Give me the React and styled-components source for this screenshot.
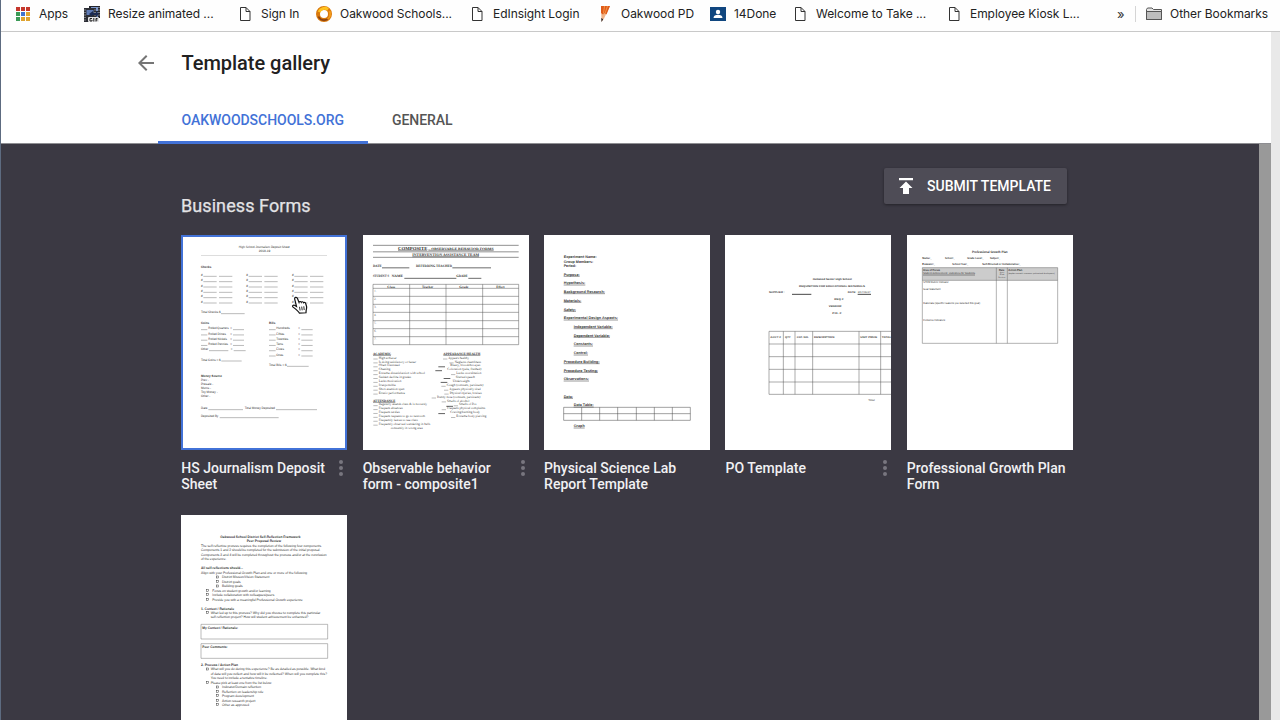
import React from 'react'
import styled, { createGlobalStyle } from 'styled-components'

const palette = {
  blue: '#4272d7',
  dark: '#3b3943',
  button: '#4e4c56',
  ink: '#212121',
  light: '#f1f1f3',
}

const GlobalStyle = createGlobalStyle`
  * { box-sizing: border-box; }
  body {
    margin: 0;
    overflow: hidden;
    background: #fff;
    font-family: Roboto, "Liberation Sans", sans-serif;
  }
`

const Screen = styled.div`
  display: flex;
  flex-direction: column;
  width: 1280px;
  height: 720px;
  overflow: hidden;
  border-left: 1px solid #5d6b80;
`

const BookmarkBar = styled.nav`
  flex: none;
  display: flex;
  align-items: center;
  height: 32px;
  padding: 0 0 4px 14px;
  border-bottom: 1px solid #c9c9c9;
  background: #fefefe;
`

const Bookmark = styled.div`
  flex: none;
  display: flex;
  align-items: center;
  gap: 8px;
  width: ${p => p.$width}px;
  color: #222;
  font: 400 12px/16px Inter, Roboto, sans-serif;
  letter-spacing: -0.05px;
  white-space: nowrap;

  svg {
    flex: none;
    display: block;
  }
`

const More = styled.span`
  width: 19px;
  padding-left: 1px;
  color: #333;
  font: 400 13px/16px Inter, Roboto, sans-serif;
`

const Separator = styled.div`
  width: 1px;
  height: 16px;
  margin-right: 10px;
  background: #d5d5d5;
`

const Body = styled.div`
  flex: 1;
  display: flex;
  min-height: 0;
`

const Page = styled.main`
  width: 1270px;
  display: flex;
  flex-direction: column;
`

const Gutter = styled.div`
  flex: 1;
  background: #e9e9e9;
`

const Header = styled.header`
  flex: none;
  height: 112px;
  background: #fff;
  border-bottom: 1px solid #8e8e92;
`

const TitleRow = styled.div`
  display: flex;
  align-items: center;
  gap: 23.5px;
  height: 61px;
  padding-left: 133px;
`

const Title = styled.h1`
  margin: 1px 0 0;
  color: ${palette.ink};
  font-size: 20px;
  font-weight: 500;
  line-height: 28px;
  letter-spacing: -0.03px;
`

const Tabs = styled.div`
  display: flex;
  height: 51px;
  padding-left: 156.5px;
`

const Tab = styled.div`
  height: 51px;
  padding: 19px 24px 0;
  color: ${p => (p.$active ? palette.blue : '#555')};
  border-bottom: ${p => (p.$active ? `3px solid ${palette.blue}` : 'none')};
  font-size: 14px;
  font-weight: 500;
  line-height: 16px;
  letter-spacing: -0.04px;
`

const Content = styled.div`
  flex: 1;
  display: flex;
  min-height: 0;
  background: ${palette.dark};
`

const Gallery = styled.section`
  width: 1258px;
  padding: 24px 0 0 180px;
`

const ScrollTrack = styled.div`
  flex: 1;
  background: #999;
`

const Toolbar = styled.div`
  display: flex;
  justify-content: space-between;
  width: 886px;
  height: 67.4px;
`

const Heading = styled.h2`
  margin: 26px 0 0;
  color: #e3e3e6;
  font-size: 18px;
  font-weight: 400;
  line-height: 24px;
  letter-spacing: 0.08px;
  -webkit-text-stroke: 0.25px #e3e3e6;
`

const SubmitButton = styled.button`
  display: flex;
  align-items: center;
  gap: 12px;
  width: 183px;
  height: 36px;
  padding: 0 0 0 13px;
  border: 0;
  border-radius: 2px;
  background: ${palette.button};
  box-shadow: 0 1px 3px rgba(0, 0, 0, 0.4);
  color: #fff;
  font: 500 14px/16px Roboto, sans-serif;
  letter-spacing: 0;
  white-space: nowrap;
`

const Grid = styled.div`
  display: grid;
  grid-template-columns: repeat(5, 166px);
  column-gap: 15.4px;
  row-gap: 24px;
  padding-left: 0.3px;
`

const Card = styled.article`
  height: 256px;
`

const Thumb = styled.div`
  position: relative;
  height: 215px;
  background: #fff;
  box-shadow: ${p => (p.$selected ? `inset 0 0 0 2px ${palette.blue}` : 'none')};

  > svg:first-child {
    display: block;
    width: 166px;
    height: 215px;
  }
`

const Caption = styled.div`
  display: flex;
  justify-content: space-between;
  padding-top: 9.6px;
`

const Name = styled.div`
  color: ${palette.light};
  font-size: 14px;
  font-weight: 500;
  line-height: 16px;
  letter-spacing: 0;
  white-space: pre;
`

const Dots = styled.div`
  display: flex;
  flex-direction: column;
  gap: 2px;
  padding: 0 4px 0 0;

  i {
    width: 4px;
    height: 4px;
    border-radius: 50%;
    background: #78767f;
  }
`

const Pointer = styled.svg`
  position: absolute;
  left: 110px;
  top: 61px;
`

/* ---- icons ---- */

const AppsIcon = () => (
  <svg width="16" height="16">
    {['#c5372c', '#c5372c', '#c5372c', '#3b9a56', '#3f73cf', '#dfa32e', '#3b9a56', '#dfa32e', '#dfa32e'].map((c, i) => (
      <rect key={i} x={1 + (i % 3) * 5} y={1 + Math.floor(i / 3) * 5} width="4" height="4" fill={c} />
    ))}
  </svg>
)

const FilmIcon = () => (
  <svg width="16" height="16">
    <rect x="5" y="0" width="11" height="12" fill="#23252c" />
    <rect x="7" y="1" width="7" height="4" fill="#7d98cc" />
    <rect x="7" y="6" width="7" height="5" fill="#7088b8" />
    <rect x="0" y="2" width="12" height="14" fill="#2c2e35" />
    <rect x="2.5" y="4" width="7" height="5" fill="#5f7bb5" />
    <path d="M1 3.5v12M11 3.5v8M15 1v10" stroke="#c9ccd4" strokeDasharray="1 1.5" />
    <path d="m5 8 4-3v2h3V5l3 3-3 3V9H8v2z" fill="#1c2b52" />
    <rect x="4" y="11" width="11" height="5" rx="1" fill="#e4e4e6" />
    <path d="M8 12.500H6v2.500h2v-1M9.800 12v3.500M13.500 12.500H12v3M12 14h1.500" fill="none" stroke="#222" />
  </svg>
)

const FileIcon = () => (
  <svg width="16" height="16" fill="none" stroke="#333">
    <path d="M3.5 1.500h5.500l4 4v9h-9.500z" fill="#fff" />
    <path d="M9 1.500v4h4" />
  </svg>
)

const RingIcon = () => (
  <svg width="16" height="16" fill="none">
    <circle cx="8" cy="8" r="6" stroke="#d9780c" strokeWidth="4" />
    <path d="M3 6a6 6 0 0 1 9-2.500" stroke="#ffc21f" strokeWidth="3" />
    <path d="M2.500 10.500a6 6 0 0 0 11 0" stroke="#8d4310" strokeWidth="1.800" />
    <path d="M13.500 5a6 6 0 0 1-2 8" stroke="#f39a19" strokeWidth="2" />
  </svg>
)

const PencilIcon = () => (
  <svg width="16" height="16">
    <path d="M4 0h9L7 12.500 4.500 16z" fill="#efb48a" />
    <path d="M4 0h9L9.500 8.500l-2-1.500L6 8.500 4 7z" fill="#de5b1b" />
    <path d="m7.500 0-1 7.500M10.500 0 8 7.500" stroke="#f59345" />
    <path d="m4.200 12 2 1.300L4.500 16z" fill="#26262c" />
  </svg>
)

const ContactIcon = () => (
  <svg width="16" height="16">
    <rect y="1" width="16" height="14" fill="#10467f" />
    <circle cx="8" cy="6" r="2.200" fill="#fff" />
    <path d="M3.500 12c0-2 2-3.200 4.500-3.200s4.500 1.200 4.500 3.200z" fill="#fff" />
  </svg>
)

const FolderIcon = () => (
  <svg width="16" height="16" stroke="#555">
    <path d="M.5 13.500v-10l1-1.500h4.500l1.500 1.500h8v10z" fill="#e4e4e4" />
    <path d="M.5 13.500v-8h15v8z" fill="#bdbdbd" />
  </svg>
)

const BackIcon = () => (
  <svg width="24" height="24" viewBox="0 0 24 24" fill="#757575">
    <path d="M20 11H7.830l5.590-5.590L12 4l-8 8 8 8 1.410-1.410L7.830 13H20v-2z" />
  </svg>
)

const PublishIcon = () => (
  <svg width="18" height="18" viewBox="0 0 18 18" fill="#fff">
    <path d="M2 1h14v2.200H2zM9 4.500 2.500 11H6v6h6v-6h3.500z" />
  </svg>
)

const HandIcon = () => (
  <Pointer width="20" height="20" viewBox="0 0 20 20">
    <path
      d="M5.500 10.500 3.700 3.200C3.200 1.200 5.800.7 6.500 2.500L8 6.400c.3-1.100 1.800-1.200 2.300-.1.500-.9 1.900-.7 2.300.4.800-.6 1.900-.1 2.100.8l.9 3.200c.3 1.500-.4 2.800-.5 4.200l-.1 1.900-6.500.4c-.7-1.700-2.600-2.800-3.800-4.100l-2.900-2.200c-.8-1.100.5-2 1.700-1.600z"
      fill="#fff"
      stroke="#111"
      strokeWidth="1.200"
    />
    <path d="m8.500 10.800.6 3.700M10.700 10.600l.5 3.700M12.800 10.300l.4 3.700" stroke="#111" strokeWidth=".9" />
  </Pointer>
)

/* ---- document previews, drawn at three units to the pixel ---- */

const Doc = ({ x = 15, font = 'Liberation Sans', size = 9.5, children }) => (
  <svg
    viewBox={`${x} 15 498 645`}
    fontFamily={`"${font}", sans-serif`}
    fontSize={size}
    fill="#333"
    textRendering="geometricPrecision"
  >
    {children}
  </svg>
)

// text that runs from x1 to x2 on the baseline y
const T = ({ x1, x2, y, b, u, size, fill, children }) => (
  <g>
    <text
      x={x1}
      y={y}
      textLength={x2 - x1}
      lengthAdjust="spacingAndGlyphs"
      fontWeight={b ? 700 : 400}
      fontSize={size}
      fill={fill}
    >
      {children}
    </text>
    {u && <path d={`M${x1} ${y + 2}H${x2}`} stroke="#333" strokeWidth="1.5" />}
  </g>
)

const Rules = ({ d, color = '#777', w = 1.5 }) => <path d={d} stroke={color} strokeWidth={w} fill="none" />

const gridPath = (xs, ys) =>
  xs.map(x => `M${x} ${ys[0]}V${ys[ys.length - 1]}`).join('') +
  ys.map(y => `M${xs[0]} ${y}H${xs[xs.length - 1]}`).join('')

const coins = [['Rolled Quarters', 158], ['Rolled Dimes', 150], ['Rolled Nickels', 153], ['Rolled Pennies', 156]]
const bills = [['Hundreds', 341], ['Fifties', 325], ['Twenties', 337], ['Tens', 321], ['Fives', 324], ['Ones', 322]]

const DepositDoc = () => (
  <Doc>
    <T x1={188} x2={341} y={54}>High School Journalism Deposit Sheet</T>
    <T x1={248} x2={283} y={66}>2018-19</T>
    <Rules d="M75 76.500H453" color="#bbb" />
    <T x1={75} x2={106} y={115} b>Checks</T>
    {[139, 155, 171, 187, 203, 219].map(y => (
      <g key={y}>
        {[75, 211, 348].map(x => (
          <g key={x}>
            <T x1={x} x2={x + 5} y={y - 1} b>#</T>
            <Rules d={`M${x + 7} ${y}h40M${x + 54} ${y}h40`} />
          </g>
        ))}
      </g>
    ))}
    <T x1={75} x2={134} y={250}>Total Checks $</T>
    <T x1={75} x2={99} y={281} b>Coins</T>
    <T x1={279} x2={298} y={281} b>Bills</T>
    {coins.map(([name, end], i) => (
      <g key={name}>
        <T x1={97} x2={end} y={298 + i * 15.8}>{name}</T>
        <T x1={163} x2={168} y={298 + i * 15.8}>=</T>
        <Rules d={`M75 ${299 + i * 15.8}h19m77 0h33`} />
      </g>
    ))}
    <T x1={75} x2={97} y={361}>Other</T>
    <T x1={164} x2={169} y={361}>=</T>
    {bills.map(([name, end], i) => (
      <g key={name}>
        <T x1={301} x2={end} y={298 + i * 15.8}>{name}</T>
        <T x1={367} x2={372} y={298 + i * 15.8}>=</T>
        <Rules d={`M279 ${299 + i * 15.8}h20m77 0h34`} />
      </g>
    ))}
    <T x1={75} x2={134} y={392}>Total Coins = $</T>
    <T x1={279} x2={332} y={408}>Total Bills = $</T>
    <T x1={75} x2={138} y={440} b>Money Source</T>
    <T x1={75} x2={98} y={452}>Prev -</T>
    <T x1={75} x2={112} y={464}>Presale -</T>
    <T x1={75} x2={105} y={476}>Mums -</T>
    <T x1={75} x2={125} y={489}>Toy Money -</T>
    <T x1={75} x2={103} y={501}>Other -</T>
    <T x1={75} x2={94} y={538}>Date</T>
    <T x1={206} x2={297} y={538}>Total Money Deposited</T>
    <T x1={75} x2={127} y={562}>Deposited By</T>
    <Rules d="M135 251H206M99 362H157M173 362H209M136 393H197M333 409H398M97 539H201M300 539H423M131 563H308" />
  </Doc>
)

const academic = [
  ['High achiever', 115], ['Is doing satisfactory or better', 173], ['Often frustrated', 124], ['Cheating', 96],
  ['Extreme dissatisfaction with school', 200], ['Sudden decline in grades', 158], ['Lacks motivation', 129],
  ['Irresponsible', 112], ['Short attention span', 138], ['Erratic performance', 140],
]
const attendance = [
  ['Regularly attends class & is not tardy', 206], ['Frequent absences', 133], ['Frequent tardies', 124],
  ['Frequent requests to go to restroom', 200], ['Frequently leaves to see class', 178],
  ['Frequently observed wandering in halls', 216],
]
const health = [
  ['Appears healthy', 270, 332], ['Neglects cleanliness', 289, 368], ['Bleary, bloodshot eyes', 276, 366, 1],
  ['Coloration (pale, flushed)', 267, 369, 1], ['Lacks coordination', 294, 369], ['Slurred speech', 292, 350, 1],
  ['Underweight', 283, 334, 1], ['Cough (constant, persistent)', 265, 375], ['Appears physically tired', 273, 367],
  ['Physical injuries, bruises', 274, 370], ['Runny nose (constant, persistent)', 236, 366],
  ['Smells of alcohol', 266, 333], ['Smells of Pot', 302, 354], ['Frequent physical complaints', 266, 381],
  ['Craving/burning body', 276, 365, 1], ['Extreme body piercing', 294, 384],
]

const BehaviorDoc = () => (
  <Doc x={14} font="Liberation Serif" size={10}>
    <Rules d="M44 46H481M44 65.500H481M44 82H481" color="#222" />
    <T x1={119} x2={207} y={59} size={14} b u>COMPOSITE</T>
    <T x1={210} x2={406} y={59} b u>– OBSERVABLE BEHAVIOR FORMS</T>
    <T x1={162} x2={362} y={78} size={11} b u>INTERVENTION ASSISTANCE TEAM</T>
    <T x1={44} x2={70} y={110} b>DATE</T>
    <T x1={173} x2={281} y={110} b>REFERRING TEACHER</T>
    <T x1={44} x2={92} y={142} b>{"STUDENT'S"}</T>
    <T x1={100} x2={134} y={142} b>NAME</T>
    <T x1={294} x2={328} y={142} b>GRADE</T>
    <Rules d="M71 113.500H153M282 113.500H398M138 145H294M330 145H369" color="#222" w={2} />
    <Rules d={gridPath([44, 154, 263, 373, 481], [163, 175, 199, 223, 247, 272, 296, 320, 344])} color="#555" />
    <T x1={87} x2={110} y={173} b>Class</T>
    <T x1={191} x2={225} y={173} b>Teacher</T>
    <T x1={303} x2={330} y={173} b>Grade</T>
    <T x1={414} x2={439} y={173} b>Effort</T>
    {[1, 2, 3, 4, 5, 6, 7].map(n => (
      <T key={n} x1={48} x2={54} y={162 + n * 24}>{`${n}.`}</T>
    ))}
    <T x1={44} x2={98} y={374} b u>ACADEMIC</T>
    {academic.map(([s, end], i) => (
      <g key={s}>
        <T x1={61} x2={end} y={386 + i * 11.7}>{s}</T>
        <Rules d={`M45 ${387 + i * 11.7}h13`} />
      </g>
    ))}
    <T x1={44} x2={111} y={515} b u>ATTENDANCE</T>
    {attendance.map(([s, end], i) => (
      <g key={s}>
        <T x1={61} x2={end} y={526 + i * 11.7}>{s}</T>
        <Rules d={`M45 ${527 + i * 11.7}h13`} />
      </g>
    ))}
    <T x1={97} x2={193} y={596}>constantly in wrong area</T>
    <T x1={255} x2={366} y={374} b u>APPEARANCE/HEALTH</T>
    {health.map(([s, start, end, mark], i) => (
      <g key={s}>
        <T x1={start} x2={end} y={386 + i * 11.7}>{s}</T>
        {mark ? (
          <Rules d={`M${start - 36} ${387 + i * 11.7}h20`} color="#111" w={2} />
        ) : (
          <Rules d={`M${start - 16} ${387 + i * 11.7}h13`} />
        )}
      </g>
    ))}
    <Rules d="M264 529H284" color="#111" w={2} />
  </Doc>
)

const labFields = [
  ['Purpose:', 71, 119, 137], ['Hypothesis:', 71, 136, 163], ['Background Research:', 71, 195, 189],
  ['Materials:', 71, 124, 215], ['Safety:', 71, 108, 242], ['Experimental Design Aspects:', 71, 234, 268],
  ['Independent Variable:', 101, 218, 294], ['Dependent Variable:', 101, 210, 320], ['Constants:', 101, 159, 346],
  ['Control:', 101, 144, 373], ['Procedure Building:', 71, 179, 399], ['Procedure Testing:', 71, 174, 425],
  ['Observations:', 71, 147, 451], ['Data:', 71, 99, 503], ['Data Table:', 101, 161, 529], ['Graph', 101, 134, 592],
]

const LabDoc = () => (
  <Doc x={12} size={11}>
    <T x1={71} x2={170} y={85} b>Experiment Name:</T>
    <T x1={71} x2={160} y={98} b>Group Members:</T>
    <T x1={71} x2={109} y={111} b>Period:</T>
    {labFields.map(([s, x1, x2, y]) => (
      <T key={s} x1={x1} x2={x2} y={y} b u>{s}</T>
    ))}
    <Rules d={gridPath([71, 125, 179, 233, 289, 343, 397, 451], [532, 551, 571])} color="#444" />
  </Doc>
)

const OrderDoc = () => (
  <Doc x={17} size={8}>
    <T x1={280} x2={397} y={150} b>Oakwood Senior High School</T>
    <T x1={239} x2={437} y={171} b>REQUISITION FOR EDUCATIONAL MATERIALS</T>
    <T x1={149} x2={196} y={190} b>SUPPLIER :</T>
    <T x1={385} x2={411} y={190} b>DATE:</T>
    <T x1={415} x2={454} y={190}>3/17/2017</T>
    <T x1={345} x2={372} y={210} b>REQ #</T>
    <T x1={328} x2={366} y={232} b>VENDOR</T>
    <T x1={339} x2={366} y={251} b>P.O. #</T>
    <Rules d="M218 193H276M415 193H455" color="#222" w={2.5} />
    <Rules d={gridPath([149, 192, 227, 280, 419, 484, 520], [304, 342, 380, 418, 456, 493])} color="#555" />
    <T x1={153} x2={185} y={325} b>ACCT #</T>
    <T x1={197} x2={214} y={325} b>QTY</T>
    <T x1={232} x2={268} y={325} b>CAT. NO.</T>
    <T x1={284} x2={345} y={325} b>DESCRIPTION</T>
    <T x1={423} x2={474} y={325} b>UNIT PRICE</T>
    <T x1={487} x2={516} y={325} b>TOTAL</T>
    <T x1={447} x2={466} y={512}>Total</T>
  </Doc>
)

const GrowthDoc = () => (
  <Doc x={21} size={8.5}>
    <T x1={216} x2={323} y={69} size={10} b>Professional Growth Plan</T>
    <T x1={67} x2={95} y={88} b>Name:_</T>
    <T x1={135} x2={164} y={88} b>School:_</T>
    <T x1={202} x2={251} y={88} b>Grade Level:_</T>
    <T x1={270} x2={301} y={88} b>Subject:_</T>
    <T x1={67} x2={105} y={105} b>Evaluator:_</T>
    <T x1={157} x2={205} y={105} b>School Year:_</T>
    <T x1={247} x2={362} y={105} b>Self-Directed or Collaborative:_</T>
    <rect x="67" y="113" width="406" height="38" fill="#ccc" />
    <Rules d={gridPath([67, 289, 322, 473], [113, 151, 340])} color="#666" />
    <T x1={69} x2={120} y={123} b>Area of Focus</T>
    <T x1={69} x2={225} y={133} size={8} u>Student Achievement: Outcomes for Students</T>
    <T x1={297} x2={313} y={123} b>Date</T>
    <T x1={299} x2={313} y={130} size={5}>Start/</T>
    <T x1={299} x2={313} y={136} size={5}>End</T>
    <T x1={295} x2={316} y={143} size={5}>Review</T>
    <T x1={325} x2={367} y={123} b>Action Plan</T>
    <T x1={325} x2={464} y={132} size={6}>(Explain research, resources, professional development)</T>
    <T x1={70} x2={146} y={160}>STEM Rubric Indicator</T>
    <T x1={70} x2={123} y={181}>Goal Statement:</T>
    <T x1={70} x2={240} y={222}>Rationale (specific reasons you selected this goal)</T>
    <T x1={70} x2={137} y={274}>Evidence Indicators:</T>
  </Doc>
)

const reflection = [
  ['The self-reflective process requires the completion of the following four components.', 75, 438, 111],
  ['Components 1 and 2 should be completed for the submission of the initial proposal.', 75, 433, 124],
  ['Components 3 and 4 will be completed throughout the process and/or at the conclusion', 75, 452, 137],
  ['of the experience.', 75, 151, 151],
  ['Align with your Professional Growth Plan and one or more of the following', 75, 393, 191],
  ['District Mission/Vision Statement', 138, 280, 205, 1],
  ['District goals', 138, 194, 218, 1],
  ['Building goals', 138, 200, 232, 1],
  ['Focus on student growth and/or learning', 109, 284, 245, 1],
  ['Include collaboration with colleagues/peers', 109, 295, 258, 1],
  ['Provide you with a meaningful Professional Growth experience', 109, 380, 272, 1],
  ['What led up to this process?  Why did you choose to complete this particular', 104, 433, 312, 1],
  ['self-reflection project?  How will student achievement be enhanced?', 104, 397, 325],
  ['What will you do during this experience?  Be as detailed as possible.  What kind', 104, 447, 481, 1],
  ['of data will you collect and how will it be collected?  When will you complete this?', 104, 453, 495],
  ['You need to include a tentative timeline.', 104, 274, 508],
  ['Please pick at least one from the list below:', 104, 288, 521, 1],
  ['Indicator/Domain reflection', 138, 255, 535, 1],
  ['Reflection on leadership role', 138, 262, 548, 1],
  ['Program development', 138, 234, 561, 1],
  ['Action research project', 138, 238, 575, 1],
  ['Other as approved', 138, 219, 588, 1],
]

const ReflectionDoc = () => (
  <Doc size={10.5}>
    <T x1={133} x2={374} y={84} b>Oakwood School District Self-Reflection Framework</T>
    <T x1={212} x2={315} y={97} b>Peer Proposal Review</T>
    <T x1={75} x2={201} y={178} b>All self-reflections should...</T>
    <T x1={75} x2={174} y={299} b>1. Context / Rationale</T>
    <T x1={75} x2={186} y={468} b>2. Process / Action Plan</T>
    {reflection.map(([s, x1, x2, y, box]) => (
      <g key={s}>
        {box && (
          <rect x={x1 > 130 ? 121 : 91} y={y - 7} width="6" height="6" fill="none" stroke="#222" strokeWidth="1.300" />
        )}
        <T x1={x1} x2={x2} y={y}>{s}</T>
      </g>
    ))}
    <Rules d="M75 343H455V387H75ZM75 401H455V445H75Z" color="#777" />
    <T x1={79} x2={186} y={357} b>My Context / Rationale:</T>
    <T x1={79} x2={155} y={415} b>Peer Comments:</T>
  </Doc>
)

const bookmarks = [
  { label: 'Apps', Icon: AppsIcon, width: 69 },
  { label: 'Resize animated ...', Icon: FilmIcon, width: 153 },
  { label: 'Sign In', Icon: FileIcon, width: 79 },
  { label: 'Oakwood Schools...', Icon: RingIcon, width: 153 },
  { label: 'EdInsight Login', Icon: FileIcon, width: 128 },
  { label: 'Oakwood PD', Icon: PencilIcon, width: 113 },
  { label: '14Done', Icon: ContactIcon, width: 82 },
  { label: 'Welcome to Take ...', Icon: FileIcon, width: 154 },
  { label: 'Employee Kiosk L...', Icon: FileIcon, width: 170 },
]

const templates = [
  { name: 'HS Journalism Deposit\nSheet', Preview: DepositDoc, menu: true, selected: true },
  { name: 'Observable behavior\nform - composite1', Preview: BehaviorDoc, menu: true },
  { name: 'Physical Science Lab\nReport Template', Preview: LabDoc },
  { name: 'PO Template', Preview: OrderDoc, menu: true },
  { name: 'Professional Growth Plan\nForm', Preview: GrowthDoc },
  { name: '', Preview: ReflectionDoc },
]

const App = () => (
  <Screen>
    <GlobalStyle />
    <BookmarkBar>
      {bookmarks.map(({ label, Icon, width }) => (
        <Bookmark key={label} $width={width}>
          <Icon />
          <span>{label}</span>
        </Bookmark>
      ))}
      <More>»</More>
      <Separator />
      <Bookmark $width={130}>
        <FolderIcon />
        <span>Other Bookmarks</span>
      </Bookmark>
    </BookmarkBar>
    <Body>
      <Page>
        <Header>
          <TitleRow>
            <BackIcon />
            <Title>Template gallery</Title>
          </TitleRow>
          <Tabs>
            <Tab $active>OAKWOODSCHOOLS.ORG</Tab>
            <Tab>GENERAL</Tab>
          </Tabs>
        </Header>
        <Content>
          <Gallery>
            <Toolbar>
              <Heading>Business Forms</Heading>
              <SubmitButton>
                <PublishIcon />
                SUBMIT TEMPLATE
              </SubmitButton>
            </Toolbar>
            <Grid>
              {templates.map(({ name, Preview, menu, selected }) => (
                <Card key={name}>
                  <Thumb $selected={selected}>
                    <Preview />
                    {selected && <HandIcon />}
                  </Thumb>
                  <Caption>
                    <Name>{name}</Name>
                    {menu && <Dots><i /><i /><i /></Dots>}
                  </Caption>
                </Card>
              ))}
            </Grid>
          </Gallery>
          <ScrollTrack />
        </Content>
      </Page>
      <Gutter />
    </Body>
  </Screen>
)

export default App
